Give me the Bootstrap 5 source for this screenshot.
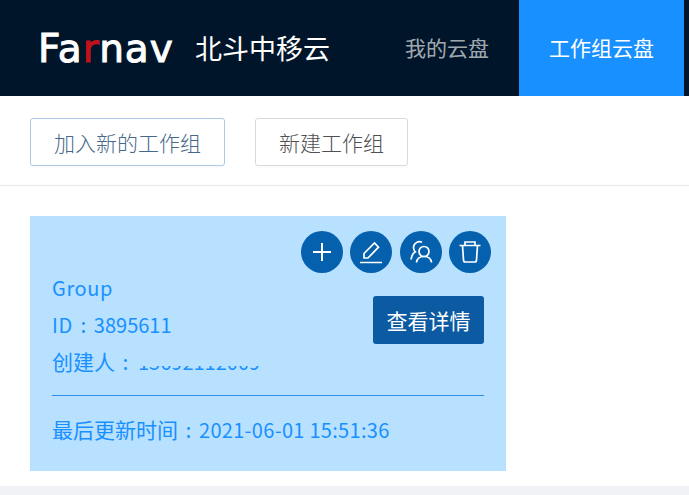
<!DOCTYPE html>
<html lang="zh-CN">
<head>
    <meta charset="UTF-8">
    <title>北斗中移云</title>
    <link href="https://cdn.jsdelivr.net/npm/bootstrap@5.3.0/dist/css/bootstrap.min.css" rel="stylesheet">
    <style>
        html, body { height: 100%; overflow: hidden; }
        body {
            font-family: "Noto Sans CJK SC", "Noto Sans", sans-serif;
            font-weight: 400;
            background: #f0f2f5;
        }
        .top-bar { height: 96px; background: #001529; padding-left: 38px; padding-right: 5px; }
        .logo-text {
            width: 135px;
            font: 400 39px/1 "DejaVu Sans", sans-serif;
            -webkit-text-stroke: 1px currentColor;
            color: #fff;
            letter-spacing: 1px;
            white-space: nowrap;
        }
        .logo-text span { color: #c0121b; }
        .brand-name { margin-left: 22px; font-size: 27px; color: #fff; }
        .top-link {
            font-size: 21px;
            color: rgba(255,255,255,.65);
            text-decoration: none;
            padding-right: 30px;
        }
        .top-link.on { width: 165px; padding-right: 0; background: #1890ff; color: #fff; }
        .tool-bar { height: 90px; background: #fff; border-bottom: 1px solid #e8e8e8; padding: 2px 0 0 30px; gap: 30px; }
        .tool-btn {
            height: 48px;
            font-size: 21px;
            font-weight: 300;
            line-height: 44px;
            padding: 0 23px;
            color: #505050;
            background: #fff;
            border: 1px solid #d9d9d9;
            border-radius: 3px;
            box-shadow: 0 2px 0 rgba(0,0,0,.015);
        }
        .tool-btn.hit { border-color: #a9cbe8; color: #46688a; }
        .group-area { height: 300px; background: #fff; padding: 30px; }
        .group-box {
            position: relative;
            width: 476px;
            height: 255px;
            background: #b8e1ff;
            color: #1890ff;
            padding: 0 22px;
            font-size: 21px;
        }
        .icon-row { position: absolute; top: 15px; right: 15px; gap: 7.33px; }
        .round-btn {
            width: 42px;
            height: 42px;
            border-radius: 50%;
            background: #0561ad;
        }
        .info-list { padding-top: 53px; }
        .info-line { height: 37px; line-height: 36px; white-space: nowrap; }
        .latin-txt { font-size: 20px; }
        .latin-txt.wide { letter-spacing: .3px; }
        .latin-txt.name-txt { letter-spacing: .6px; }
        /* colon sits in the middle of a full cell in the reference */
        .colon-mark { display: inline-block; width: 1em; text-align: center; }
        /* the number is half hidden in the reference, only its lower edge shows */
        .clip-num { display: inline-block; margin-left: 2px; clip-path: inset(22px 0 0 0); }
        .detail-btn {
            position: absolute;
            top: 80px;
            right: 22px;
            width: 111px;
            height: 48px;
            line-height: 46px;
            padding: 0;
            font-size: 21px;
            color: #fff;
            background: #0b5aa2;
            border: 0;
            border-radius: 3px;
        }
        .split-line { margin: 15px 0 15px; height: 1px; background: #2f8fe6; }
    </style>
</head>
<body>
    <nav class="top-bar d-flex align-items-center">
        <div class="logo-text">Fa<span>r</span>nav</div>
        <div class="brand-name">北斗中移云</div>
        <div class="d-flex ms-auto align-self-stretch">
            <a href="#" class="top-link d-flex align-items-center justify-content-center">我的云盘</a>
            <a href="#" class="top-link on d-flex align-items-center justify-content-center">工作组云盘</a>
        </div>
    </nav>
    <div class="tool-bar d-flex align-items-center">
        <button class="tool-btn hit">加入新的工作组</button>
        <button class="tool-btn">新建工作组</button>
    </div>
    <div class="group-area">
        <div class="group-box">
            <div class="icon-row d-flex">
                <div class="round-btn d-flex align-items-center justify-content-center">
                    <svg width="22" height="22" viewBox="0 0 22 22" fill="none" stroke="#fff" stroke-width="2"><path d="M11 2v18M2 11h18"/></svg>
                </div>
                <div class="round-btn d-flex align-items-center justify-content-center">
                    <svg width="24" height="24" viewBox="0 0 24 24" fill="none" stroke="#fff" stroke-width="1.7"><path d="M1 22.500h22M5 18v-4.500L15.500 3l4 4.200L9 18z"/></svg>
                </div>
                <div class="round-btn d-flex align-items-center justify-content-center">
                    <svg width="24" height="24" viewBox="0 0 24 24" fill="none" stroke="#fff" stroke-width="1.7"><circle cx="15" cy="11.500" r="5"/><path d="M7.500 22.500c.5-4.500 3.500-6 7.500-6s7 1.500 7.500 6M13 2.300A6 6 0 0 0 4.500 7.500c0 1.800.7 3.300 1.800 4.300C3.800 13.200 2.500 16 2 19.500"/></svg>
                </div>
                <div class="round-btn d-flex align-items-center justify-content-center">
                    <svg width="24" height="24" viewBox="0 0 24 24" fill="none" stroke="#fff" stroke-width="1.7"><path d="M1.500 5.500h21M7 5.500V2h10v3.500M4.500 5.500l1 14.500a2 2 0 0 0 2 2h9a2 2 0 0 0 2-2l1-14.500"/></svg>
                </div>
            </div>
            <div class="info-list">
                <div class="info-line"><span class="latin-txt name-txt">Group</span></div>
                <div class="info-line"><span class="latin-txt name-txt">ID</span><span class="colon-mark">:</span><span class="latin-txt">3895611</span></div>
                <div class="info-line">创建人<span class="colon-mark">:</span><span class="latin-txt clip-num">15692112009</span></div>
            </div>
            <button class="detail-btn">查看详情</button>
            <div class="split-line"></div>
            <div class="info-line">最后更新时间<span class="colon-mark">:</span><span class="latin-txt wide">2021-06-01 15:51:36</span></div>
        </div>
    </div>
    <script src="https://cdn.jsdelivr.net/npm/bootstrap@5.3.0/dist/js/bootstrap.bundle.min.js"></script>
</body>
</html>
